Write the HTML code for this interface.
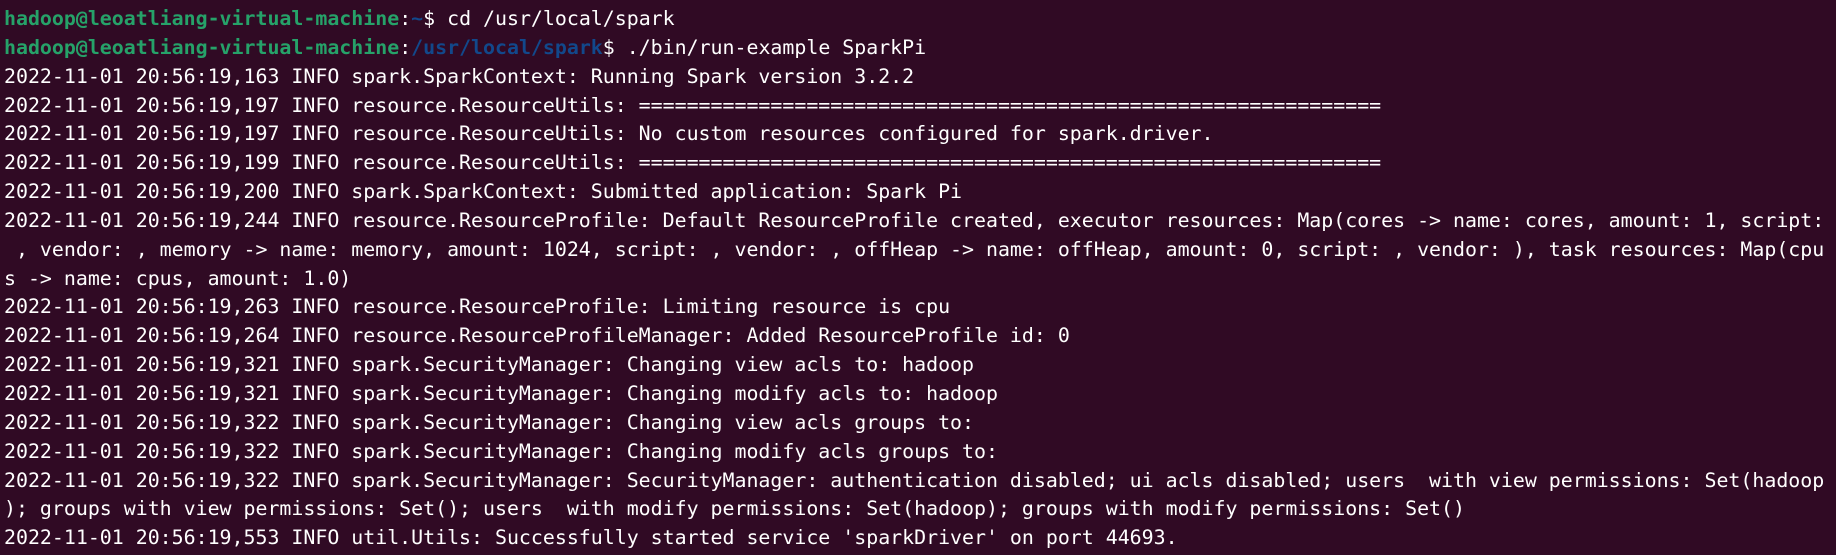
<!DOCTYPE html>
<html><head><meta charset="utf-8"><style>
html,body{margin:0;padding:0;background:#300a24;width:1836px;height:555px;overflow:hidden}
pre{margin:0;padding:5px 0 0 4px;font-family:"DejaVu Sans Mono","Liberation Mono",monospace;font-size:19.9px;line-height:28.85px;color:#ffffff;white-space:pre}
.g{color:#26a269;font-weight:bold}
.b{color:#12488b;font-weight:bold}
</style></head><body><pre><span class="g">hadoop@leoatliang-virtual-machine</span>:<span class="b">~</span>$ cd /usr/local/spark
<span class="g">hadoop@leoatliang-virtual-machine</span>:<span class="b">/usr/local/spark</span>$ ./bin/run-example SparkPi
2022-11-01 20:56:19,163 INFO spark.SparkContext: Running Spark version 3.2.2
2022-11-01 20:56:19,197 INFO resource.ResourceUtils: ==============================================================
2022-11-01 20:56:19,197 INFO resource.ResourceUtils: No custom resources configured for spark.driver.
2022-11-01 20:56:19,199 INFO resource.ResourceUtils: ==============================================================
2022-11-01 20:56:19,200 INFO spark.SparkContext: Submitted application: Spark Pi
2022-11-01 20:56:19,244 INFO resource.ResourceProfile: Default ResourceProfile created, executor resources: Map(cores -&gt; name: cores, amount: 1, script:
 , vendor: , memory -&gt; name: memory, amount: 1024, script: , vendor: , offHeap -&gt; name: offHeap, amount: 0, script: , vendor: ), task resources: Map(cpu
s -&gt; name: cpus, amount: 1.0)
2022-11-01 20:56:19,263 INFO resource.ResourceProfile: Limiting resource is cpu
2022-11-01 20:56:19,264 INFO resource.ResourceProfileManager: Added ResourceProfile id: 0
2022-11-01 20:56:19,321 INFO spark.SecurityManager: Changing view acls to: hadoop
2022-11-01 20:56:19,321 INFO spark.SecurityManager: Changing modify acls to: hadoop
2022-11-01 20:56:19,322 INFO spark.SecurityManager: Changing view acls groups to:
2022-11-01 20:56:19,322 INFO spark.SecurityManager: Changing modify acls groups to:
2022-11-01 20:56:19,322 INFO spark.SecurityManager: SecurityManager: authentication disabled; ui acls disabled; users  with view permissions: Set(hadoop
); groups with view permissions: Set(); users  with modify permissions: Set(hadoop); groups with modify permissions: Set()
2022-11-01 20:56:19,553 INFO util.Utils: Successfully started service 'sparkDriver' on port 44693.</pre></body></html>
